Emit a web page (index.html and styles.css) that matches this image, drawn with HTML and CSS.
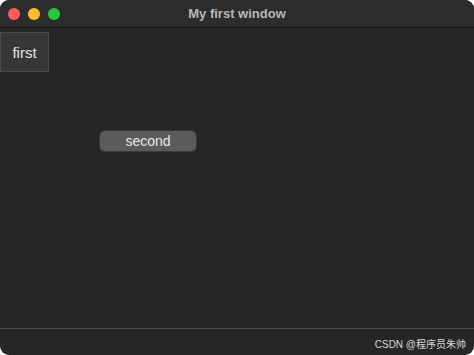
FILE: index.html
```html
<!DOCTYPE html>
<html lang="en">
<head>
  <meta charset="UTF-8">
  <title>My first window</title>
  <link rel="stylesheet" href="styles.css">
</head>
<body>
  <div class="window">
    <div class="titlebar">
      <div class="lights">
        <span class="light red"></span>
        <span class="light yellow"></span>
        <span class="light green"></span>
      </div>
      <div class="title">My first window</div>
    </div>
    <div class="content">
      <button class="btn-first">first</button>
      <button class="btn-second">second</button>
    </div>
    <div class="statusbar">
      <span class="mark">CSDN @程序员朱帅</span>
    </div>
  </div>
</body>
</html>
```

FILE: styles.css
```css
body {
  margin: 0;
  background: #ffffff;
  font-family: "Liberation Sans", Arial, "Noto Sans CJK SC", sans-serif;
}

.window {
  width: 474px;
  height: 355px;
  background: #262626;
  border-radius: 9px;
  overflow: hidden;
  display: flex;
  flex-direction: column;
}

.titlebar {
  height: 27px;
  background: #2c2c2c;
  border-bottom: 1px solid #161616;
  display: flex;
  align-items: center;
  position: relative;
}

.lights {
  display: flex;
  gap: 8px;
  padding-left: 8px;
}

.light {
  width: 12px;
  height: 12px;
  border-radius: 50%;
}

.red { background: #fe5f57; }
.yellow { background: #febc2e; }
.green { background: #28c840; }

.title {
  position: absolute;
  left: 0;
  right: 0;
  text-align: center;
  font-size: 13px;
  font-weight: bold;
  color: #b8b8b8;
}

.content {
  flex: 1;
  display: flex;
  flex-direction: column;
  align-items: flex-start;
}

button {
  font-family: inherit;
  color: #e8e8e8;
  font-size: 14px;
  padding: 0;
  cursor: pointer;
}

.btn-first {
  margin-top: 4px;
  width: 49px;
  height: 40px;
  font-size: 15px;
  background: #363636;
  border: 1px solid #4a4a4a;
}

.btn-second {
  margin-top: 59px;
  margin-left: 100px;
  width: 96px;
  height: 20px;
  background: #5b5b5b;
  border: none;
  border-radius: 5px;
  box-shadow: 0 0 0 1px #3a3a3a;
}

.statusbar {
  height: 26px;
  border-top: 1px solid #4e4e4e;
  display: flex;
  justify-content: flex-end;
  align-items: flex-end;
  padding-right: 8px;
}

.mark {
  font-size: 10px;
  color: #d8d8d8;
  padding-bottom: 4px;
}
```
